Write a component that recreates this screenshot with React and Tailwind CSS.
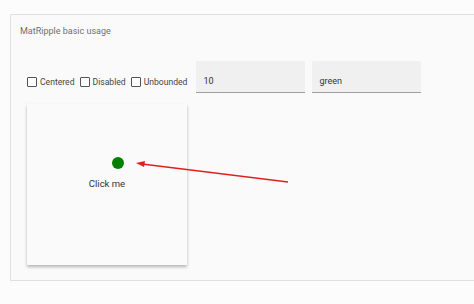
import React from "react";

function Check({ label }) {
  return (
    <label className="flex items-center gap-[3px]">
      <span className="w-[10px] h-[10px] border border-[#555] rounded-[1px] bg-white" />
      <span>{label}</span>
    </label>
  );
}

function Field({ value }) {
  return (
    <div className="w-[109px] h-[32px] bg-[#f0f0f0] border-b border-[#a0a0a0] rounded-t-[2px] flex items-center px-[7px] pt-[10px] text-[9px] text-[#333]">
      {value}
    </div>
  );
}

export default function App() {
  return (
    <div
      className="relative w-[474px] h-[304px] bg-[#fcfcfc] overflow-hidden"
      style={{ fontFamily: "Roboto, 'Liberation Sans', sans-serif" }}
    >
      <div className="pt-[14px] pl-[10px]">
        <div className="w-[470px] h-[267px] border border-[#e0e0e0] bg-[#fafafa] pl-[9px] pt-[10px]">
          <div className="text-[9px] text-[#707070] leading-[12px]">MatRipple basic usage</div>
          <div className="flex items-end gap-[7px] mt-[24px] pl-[7px] text-[8.6px] text-[#444]">
            <div className="flex items-center gap-[5px] h-[21px] mr-[2px]">
              <Check label="Centered" />
              <Check label="Disabled" />
              <Check label="Unbounded" />
            </div>
            <Field value="10" />
            <Field value="green" />
          </div>
          <div className="ml-[7px] mt-[11px] w-[160px] h-[161px] bg-[#fafafa] shadow-[0_2px_3px_rgba(0,0,0,0.28)] flex flex-col items-center pt-[53px]">
            <div className="w-[12px] h-[12px] rounded-full bg-[#008000] ml-[22px]" />
            <div className="mt-[9px] text-[9.5px] text-[#333] leading-[12px]">Click me</div>
          </div>
        </div>
      </div>
      <svg className="absolute left-0 top-0 pointer-events-none" width="474" height="304">
        <line x1="288" y1="182" x2="142" y2="164" stroke="#e0201e" strokeWidth="1.6" />
        <polygon points="136,163 145,161 144,167" fill="#e0201e" />
      </svg>
    </div>
  );
}
